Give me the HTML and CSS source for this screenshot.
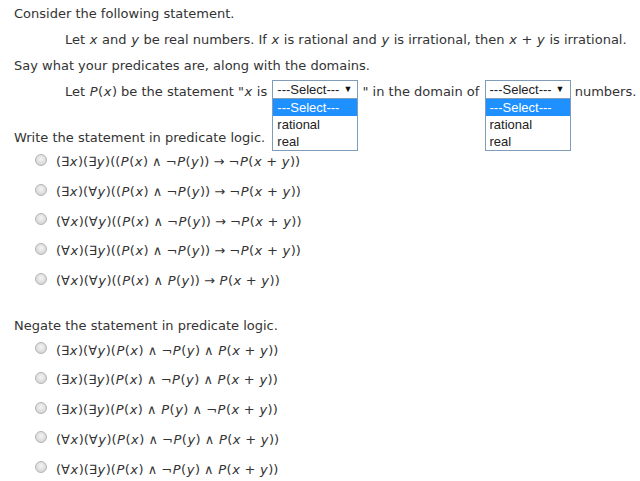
FILE: index.html
```html
<!DOCTYPE html>
<html lang="en">
  <head>
    <meta charset="UTF-8" />
    <title>Predicate logic</title>
    <link rel="stylesheet" href="styles.css">
  </head>
  <body>
    <div class="question">
      <p class="line">Consider the following statement.</p>
      <p class="line indent">
        Let <i>x</i> and <i>y</i> be real numbers. If <i>x</i> is rational and
        <i>y</i> is irrational, then <i>x</i> + <i>y</i> is irrational.
      </p>
      <p class="line">Say what your predicates are, along with the domains.</p>
      <p class="line indent predicates">
        Let <i>P</i>(<i>x</i>) be the statement "<i>x</i> is
        <span class="select">
          <span class="select-box">---Select---<span class="arrow">&#9660;</span></span>
          <span class="select-list">
            <span class="option selected">---Select---</span>
            <span class="option">rational</span>
            <span class="option">real</span>
          </span>
        </span>
        " in the domain of
        <span class="select">
          <span class="select-box">---Select---<span class="arrow">&#9660;</span></span>
          <span class="select-list">
            <span class="option selected">---Select---</span>
            <span class="option">rational</span>
            <span class="option">real</span>
          </span>
        </span>
        numbers.
      </p>

      <p class="line heading">Write the statement in predicate logic.</p>
      <ul class="choices">
        <li><span class="radio"></span><span class="formula">(&exist;<i>x</i>)(&exist;<i>y</i>)((<i>P</i>(<i>x</i>) &and; &not;<i>P</i>(<i>y</i>)) &rarr; &not;<i>P</i>(<i>x</i> + <i>y</i>))</span></li>
        <li><span class="radio"></span><span class="formula">(&exist;<i>x</i>)(&forall;<i>y</i>)((<i>P</i>(<i>x</i>) &and; &not;<i>P</i>(<i>y</i>)) &rarr; &not;<i>P</i>(<i>x</i> + <i>y</i>))</span></li>
        <li><span class="radio"></span><span class="formula">(&forall;<i>x</i>)(&forall;<i>y</i>)((<i>P</i>(<i>x</i>) &and; &not;<i>P</i>(<i>y</i>)) &rarr; &not;<i>P</i>(<i>x</i> + <i>y</i>))</span></li>
        <li><span class="radio"></span><span class="formula">(&forall;<i>x</i>)(&exist;<i>y</i>)((<i>P</i>(<i>x</i>) &and; &not;<i>P</i>(<i>y</i>)) &rarr; &not;<i>P</i>(<i>x</i> + <i>y</i>))</span></li>
        <li><span class="radio"></span><span class="formula">(&forall;<i>x</i>)(&forall;<i>y</i>)((<i>P</i>(<i>x</i>) &and; <i>P</i>(<i>y</i>)) &rarr; <i>P</i>(<i>x</i> + <i>y</i>))</span></li>
      </ul>

      <p class="line heading negate">Negate the statement in predicate logic.</p>
      <ul class="choices">
        <li><span class="radio"></span><span class="formula">(&exist;<i>x</i>)(&forall;<i>y</i>)(<i>P</i>(<i>x</i>) &and; &not;<i>P</i>(<i>y</i>) &and; <i>P</i>(<i>x</i> + <i>y</i>))</span></li>
        <li><span class="radio"></span><span class="formula">(&exist;<i>x</i>)(&exist;<i>y</i>)(<i>P</i>(<i>x</i>) &and; &not;<i>P</i>(<i>y</i>) &and; <i>P</i>(<i>x</i> + <i>y</i>))</span></li>
        <li><span class="radio"></span><span class="formula">(&exist;<i>x</i>)(&exist;<i>y</i>)(<i>P</i>(<i>x</i>) &and; <i>P</i>(<i>y</i>) &and; &not;<i>P</i>(<i>x</i> + <i>y</i>))</span></li>
        <li><span class="radio"></span><span class="formula">(&forall;<i>x</i>)(&forall;<i>y</i>)(<i>P</i>(<i>x</i>) &and; &not;<i>P</i>(<i>y</i>) &and; <i>P</i>(<i>x</i> + <i>y</i>))</span></li>
        <li><span class="radio"></span><span class="formula">(&forall;<i>x</i>)(&exist;<i>y</i>)(<i>P</i>(<i>x</i>) &and; &not;<i>P</i>(<i>y</i>) &and; <i>P</i>(<i>x</i> + <i>y</i>))</span></li>
      </ul>
    </div>
  </body>
</html>
```

FILE: styles.css
```css
body {
  margin: 0;
  padding: 0 0 0 14px;
  background-color: #fff;
  color: #333;
  font-family: "DejaVu Sans", Verdana, sans-serif;
  font-size: 13px;
}
i {
  padding: 0 0.5px;
}
.question {
  padding-top: 1px;
}
.line {
  margin: 0;
  height: 26px;
  line-height: 26px;
  white-space: nowrap;
}
.indent {
  padding-left: 51px;
}
.predicates {
  height: 46px;
}
.select {
  position: relative;
  display: inline-block;
  vertical-align: 2px;
  margin-left: 1px;
}
.select-box {
  display: flex;
  align-items: center;
  justify-content: space-between;
  box-sizing: border-box;
  width: 86px;
  height: 19px;
  padding: 0 5px 0 4px;
  border: 1px solid #7f9db9;
  font-family: "Liberation Sans", Arial, sans-serif;
  font-size: 13px;
  line-height: 17px;
  color: #222;
}
.arrow {
  font-size: 9px;
  color: #111;
}
.select-list {
  position: absolute;
  top: 19px;
  left: 0;
  box-sizing: border-box;
  width: 86px;
  border: 1px solid #7f9db9;
  border-top: none;
  background-color: #fff;
  font-family: "Liberation Sans", Arial, sans-serif;
  font-size: 13px;
  line-height: 17px;
}
.option {
  display: block;
  height: 17px;
  padding-left: 4px;
  color: #222;
}
.option.selected {
  background-color: #1e90ff;
  color: #fff;
}
.heading {
  height: 22px;
}
.negate {
  margin-top: 18px;
}
.choices {
  list-style: none;
  margin: 0;
  padding: 0 0 0 21px;
}
.choices li {
  display: flex;
  align-items: center;
  height: 29.7px;
  white-space: nowrap;
}
.radio {
  flex: none;
  box-sizing: border-box;
  width: 12px;
  height: 12px;
  margin: -4px 9px 0 0;
  border: 1px solid #b4b4b4;
  border-radius: 50%;
  background: radial-gradient(circle at 50% 40%, #f4f4f4 0%, #dcdcdc 60%, #cfcfcf 100%);
}
```
